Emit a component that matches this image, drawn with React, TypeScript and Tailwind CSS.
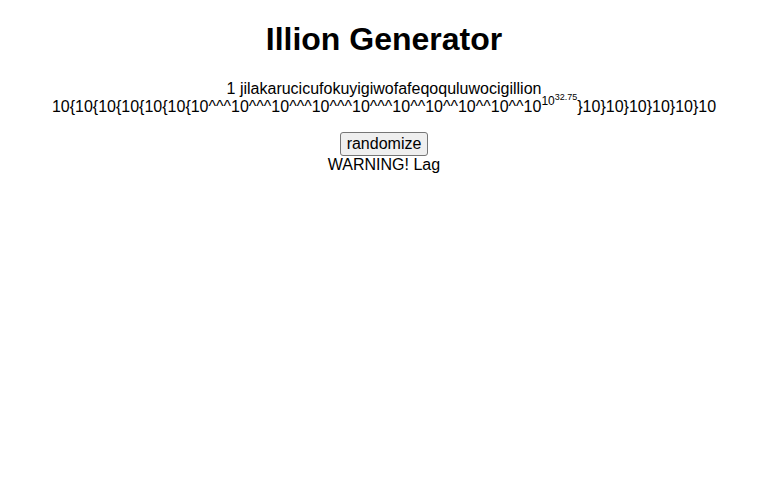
export default function App() {
  const carets3 = Array.from({ length: 5 }, () => '10^^^').join('');
  const carets2 = Array.from({ length: 4 }, () => '10^^').join('');

  return (
    <div className="min-h-[480px] bg-white text-center font-['Liberation_Sans',Arial,sans-serif] text-base leading-[normal] text-black">
      <h1 className="my-[21.44px] text-[32px] font-bold leading-[37px]">Illion Generator</h1>
      <div>
        <div>1 jilakarucicufokuyigiwofafeqoquluwocigillion</div>
        <div>
          10{'{'}10{'{'}10{'{'}10{'{'}10{'{'}10{'{'}
          {carets3}
          {carets2}10
          <sup className="relative -top-[0.55em] align-baseline text-[12px]">
            10
            <sup className="relative -top-[0.55em] align-baseline text-[9px]">32.75</sup>
          </sup>
          {'}'}10{'}'}10{'}'}10{'}'}10{'}'}10{'}'}10
        </div>
      </div>
      <div className="mt-[16px]">
        <button className="h-[24px] rounded-[3px] border border-[#767676] bg-[#efefef] px-[6px] leading-[normal] text-black">
          randomize
        </button>
        <div>WARNING! Lag</div>
      </div>
    </div>
  );
}
